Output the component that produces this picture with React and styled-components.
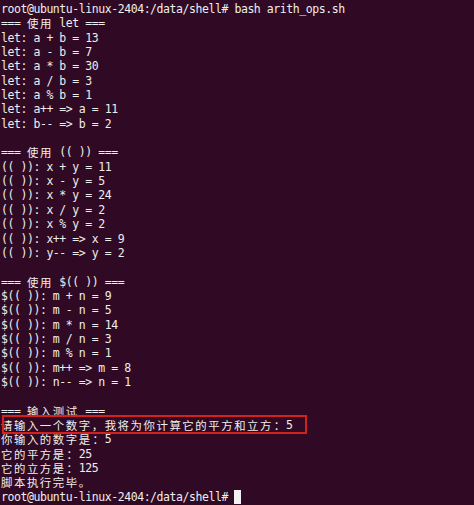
import React from 'react'
import styled, { createGlobalStyle } from 'styled-components'

const GlobalStyle = createGlobalStyle`
  html, body {
    margin: 0;
    padding: 0;
    background: #300a24;
  }
`

const Terminal = styled.div`
  width: 474px;
  height: 505px;
  overflow: hidden;
  background: #300a24;
  color: #eeeeec;
  padding: 2px 0 0 1px;
  box-sizing: border-box;
  font-family: "DejaVu Sans Mono", "Liberation Mono", monospace;
  font-size: 11.5px;
  letter-spacing: -0.44px;
  display: flex;
  flex-direction: column;
`

const Line = styled.div`
  position: relative;
  height: 14.35px;
  line-height: 14.35px;
  white-space: pre;
  ${(p) =>
    p.$marked &&
    `
    &::after {
      content: '';
      position: absolute;
      left: 1px;
      top: -3px;
      width: 301px;
      height: 15px;
      border: 2px solid #d3221d;
    }
  `}
`

// a CJK glyph takes two terminal cells
const Wide = styled.span`
  display: inline-block;
  width: 12.96px;
  height: 14.35px;
  line-height: 14.35px;
  font-family: "Noto Sans CJK SC", sans-serif;
  font-size: 11.4px;
  letter-spacing: 0;
  text-align: ${(p) => (p.$punct ? 'center' : 'left')};
  vertical-align: top;
`

const Cursor = styled.span`
  display: inline-block;
  width: 6.5px;
  height: 14px;
  background: #f2f2f2;
  vertical-align: top;
`

const lines = [
  'root@ubuntu-linux-2404:/data/shell# bash arith_ops.sh',
  '=== 使用 let ===',
  'let: a + b = 13',
  'let: a - b = 7',
  'let: a * b = 30',
  'let: a / b = 3',
  'let: a % b = 1',
  'let: a++ => a = 11',
  'let: b-- => b = 2',
  '',
  '=== 使用 (( )) ===',
  '(( )): x + y = 11',
  '(( )): x - y = 5',
  '(( )): x * y = 24',
  '(( )): x / y = 2',
  '(( )): x % y = 2',
  '(( )): x++ => x = 9',
  '(( )): y-- => y = 2',
  '',
  '=== 使用 $(( )) ===',
  '$(( )): m + n = 9',
  '$(( )): m - n = 5',
  '$(( )): m * n = 14',
  '$(( )): m / n = 3',
  '$(( )): m % n = 1',
  '$(( )): m++ => m = 8',
  '$(( )): n-- => n = 1',
  '',
  '=== 输入测试 ===',
  '请输入一个数字，我将为你计算它的平方和立方：5',
  '你输入的数字是：5',
  '它的平方是：25',
  '它的立方是：125',
  '脚本执行完毕。',
]

const wideRe = /[\u3000-\u9fff\uff00-\uffef]/

function renderText(text) {
  const out = []
  let buf = ''
  Array.from(text).forEach((ch, i) => {
    if (wideRe.test(ch)) {
      if (buf) out.push(buf)
      buf = ''
      out.push(
        <Wide key={i} $punct={ch === '：'}>
          {ch}
        </Wide>
      )
    } else {
      buf += ch
    }
  })
  if (buf) out.push(buf)
  return out
}

export default function App() {
  return (
    <>
      <GlobalStyle />
      <Terminal>
        {lines.map((l, i) => (
          <Line key={i} $marked={l.startsWith('请输入')}>
            {renderText(l)}
          </Line>
        ))}
        <Line>
          root@ubuntu-linux-2404:/data/shell# <Cursor />
        </Line>
      </Terminal>
    </>
  )
}
